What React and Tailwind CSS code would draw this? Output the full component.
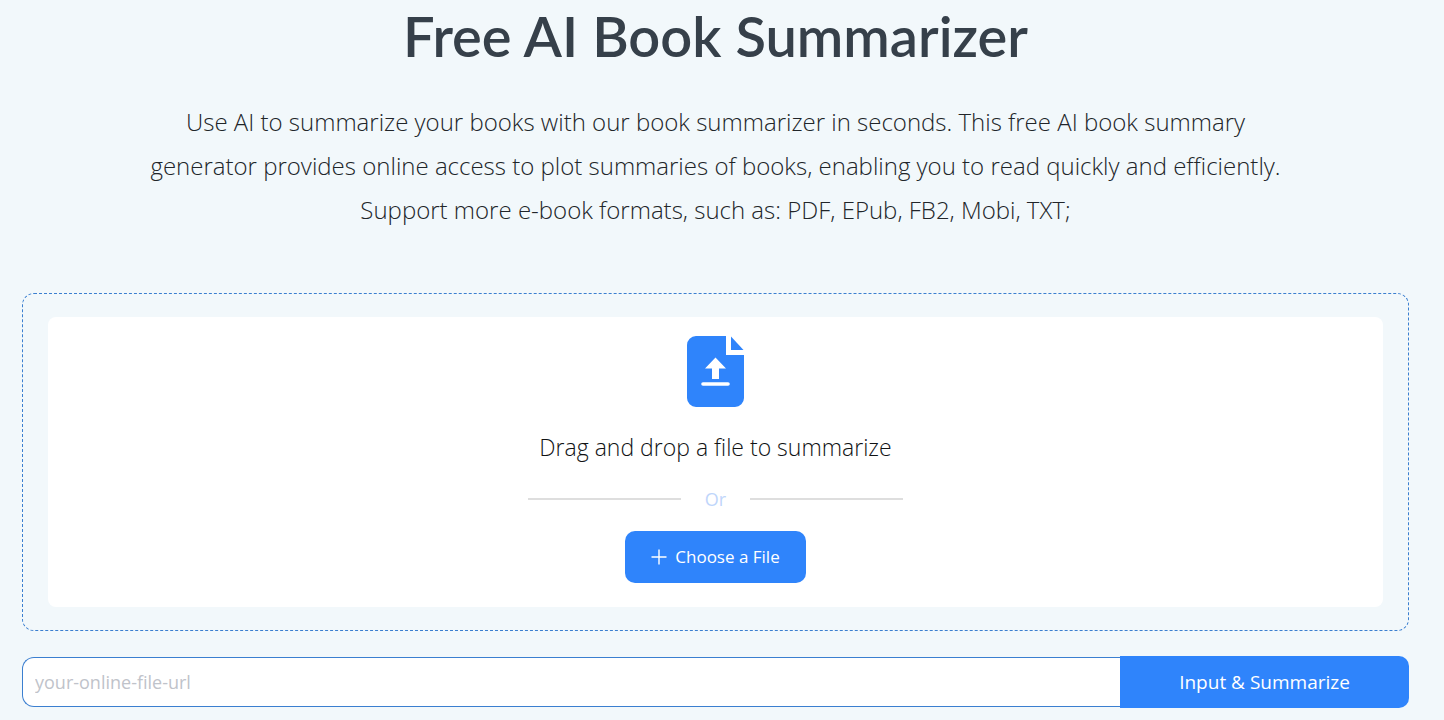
import { useState } from 'react';

const UploadIcon = () => (
  <svg width="57" height="71" viewBox="0 0 57 71" aria-hidden="true">
    <path
      fill="#2f84fb"
      d="M9 0H39V19H57V62a9 9 0 0 1-9 9H9a9 9 0 0 1-9-9V9a9 9 0 0 1 9-9Z"
    />
    <path fill="#2f84fb" d="M44 0.5 56.500 14H44Z" />
    <path fill="#fff" d="M28.500 21.500 39 32.500H32V43H25V32.500H18Z" />
    <path stroke="#fff" strokeWidth="3.600" strokeLinecap="round" d="M16 48H41" />
  </svg>
);

const PlusIcon = () => (
  <svg width="16" height="16" viewBox="0 0 16 16" aria-hidden="true">
    <path stroke="currentColor" strokeWidth="1.400" d="M8 0.500V15.500M0.500 8H15.500" />
  </svg>
);

export default function App() {
  const [url, setUrl] = useState('');

  return (
    <div className="min-h-screen bg-[#f2f8fb] pl-[22px] pr-[35px] pb-3 font-['Open_Sans',sans-serif]">
      {/* Heading */}
      <header className="text-center">
        <h1 className="pt-1 font-['Lato',sans-serif] text-[56px] leading-[64px] font-semibold text-[#36404a]">
          Free AI Book Summarizer
        </h1>
        <p className="pt-8 text-2xl leading-[44px] font-light text-[#212529]">
          Use AI to summarize your books with our book summarizer in seconds. This free AI book summary
          <br />
          generator provides online access to plot summaries of books, enabling you to read quickly and efficiently.
          <br />
          Support more e-book formats, such as: PDF, EPub, FB2, Mobi, TXT;
        </p>
      </header>

      <main>
        {/* Drop zone */}
        <section className="mt-[61px] rounded-xl border border-dashed border-[#3b7fd0] px-[25px] pt-[23px] pb-[23px]">
          <div className="flex flex-col items-center rounded-lg bg-white pt-[19px] pb-6">
            <UploadIcon />
            <p className="mt-6 text-[23px] leading-8 font-light text-[#101214]">
              Drag and drop a file to summarize
            </p>
            <div className="mt-[22px] flex w-[375px] items-center gap-6">
              <span className="h-0.5 flex-1 bg-[#dedede]" />
              <span className="text-lg leading-7 text-[#bfd6fb]">Or</span>
              <span className="h-0.5 flex-1 bg-[#dedede]" />
            </div>
            <button
              type="button"
              className="mt-[18px] flex h-[52px] items-center gap-2 rounded-[10px] bg-[#2f84fb] px-[26px] text-[17px] text-white"
            >
              <PlusIcon />
              Choose a File
            </button>
          </div>
        </section>

        {/* Url form */}
        <form className="mt-[25px] flex items-center" onSubmit={(e) => e.preventDefault()}>
          <input
            type="text"
            aria-label="Online file url"
            placeholder="your-online-file-url"
            value={url}
            onChange={(e) => setUrl(e.target.value)}
            className="h-[50px] min-w-0 flex-1 rounded-l-xl border border-r-0 border-[#3b7fd0] bg-white px-3 text-lg text-[#212529] outline-none placeholder:text-[#bfc3ca]"
          />
          <button type="submit" className="h-[52px] w-[289px] rounded-r-[10px] bg-[#2f84fb] text-[19px] text-white">
            Input &amp; Summarize
          </button>
        </form>
      </main>
    </div>
  );
}
